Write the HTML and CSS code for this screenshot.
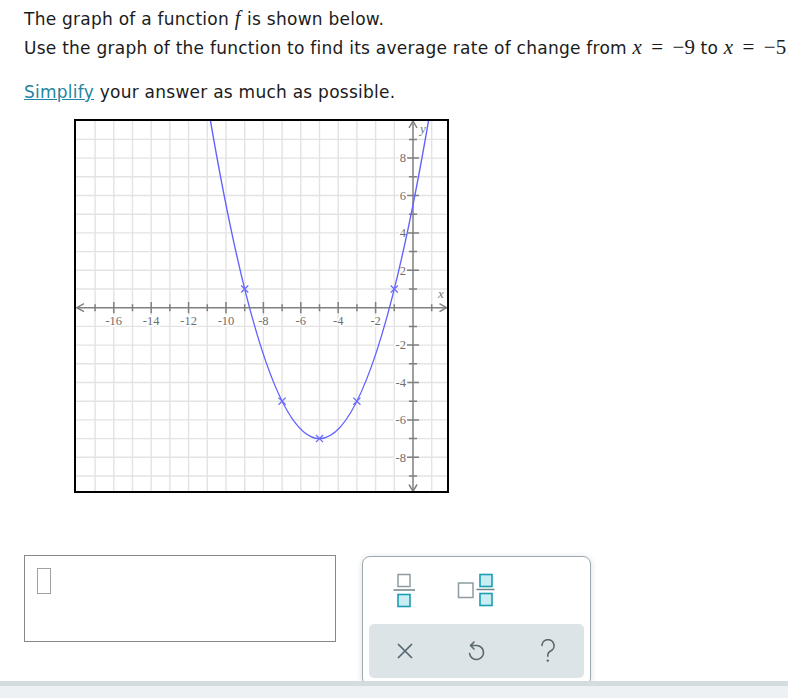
FILE: index.html
```html
<!DOCTYPE html>
<html lang="en">
<head>
    <meta charset="UTF-8">
    <meta name="viewport" content="width=device-width, initial-scale=1.0">
    <title>Average rate of change</title>
    <link rel="stylesheet" href="styles.css">
</head>
<body>
    <div class="question">
        <p class="line">The graph of a function <i class="mvar">f</i> is shown below.</p>
        <p class="line">Use the graph of the function to find its average rate of change from <span class="math"><i>x</i><span class="rel">=</span>−9</span> to <span class="math"><i>x</i><span class="rel">=</span>−5</span>.</p>
        <p class="line hint"><a href="#" class="link">Simplify</a> your answer as much as possible.</p>

        <div class="graph">
            <svg width="375" height="374" viewBox="0 0 375 374">
                <defs>
                    <clipPath id="plot">
                        <rect x="2" y="2" width="371" height="370"/>
                    </clipPath>
                </defs>
                <rect x="0" y="0" width="375" height="374" fill="#fff"/>

                <!-- grid, axes and curve in graph units -->
                <g transform="matrix(18.7 0 0 -18.7 339 188.7)">
                    <path class="grid" vector-effect="non-scaling-stroke"
                          d="M-17 -10V10M-16 -10V10M-15 -10V10M-14 -10V10M-13 -10V10M-12 -10V10M-11 -10V10M-10 -10V10M-9 -10V10M-8 -10V10M-7 -10V10M-6 -10V10M-5 -10V10M-4 -10V10M-3 -10V10M-2 -10V10M-1 -10V10M1 -10V10
                             M-19 9H3M-19 8H3M-19 7H3M-19 6H3M-19 5H3M-19 4H3M-19 3H3M-19 2H3M-19 1H3M-19 -1H3M-19 -2H3M-19 -3H3M-19 -4H3M-19 -5H3M-19 -6H3M-19 -7H3M-19 -8H3M-19 -9H3"/>
                    <path class="axis" vector-effect="non-scaling-stroke"
                          d="M-17.95 0H1.95M0 -9.95V9.95"/>
                    <!-- ticks: even long, odd short -->
                    <path class="axis" vector-effect="non-scaling-stroke"
                          d="M-16 -0.3V0.3M-14 -0.3V0.3M-12 -0.3V0.3M-10 -0.3V0.3M-8 -0.3V0.3M-6 -0.3V0.3M-4 -0.3V0.3M-2 -0.3V0.3
                             M-17 -0.19V0.19M-15 -0.19V0.19M-13 -0.19V0.19M-11 -0.19V0.19M-9 -0.19V0.19M-7 -0.19V0.19M-5 -0.19V0.19M-3 -0.19V0.19M-1 -0.19V0.19M1 -0.19V0.19
                             M-0.32 8H0.32M-0.32 6H0.32M-0.32 4H0.32M-0.32 2H0.32M-0.32 -2H0.32M-0.32 -4H0.32M-0.32 -6H0.32M-0.32 -8H0.32
                             M-0.22 9H0.22M-0.22 7H0.22M-0.22 5H0.22M-0.22 3H0.22M-0.22 1H0.22M-0.22 -1H0.22M-0.22 -3H0.22M-0.22 -5H0.22M-0.22 -7H0.22M-0.22 -9H0.22"/>
                </g>

                <!-- arrow heads -->
                <path class="axis" d="M10 184.7L2.8 188.7L10 192.7M365.5 184.7L372.5 188.7L365.5 192.7M335 9L339 2L343 9M335 365.5L339 372.3L343 365.5"/>

                <g class="xlabels">
                    <text x="39.8" y="206">-16</text>
                    <text x="77.2" y="206">-14</text>
                    <text x="114.6" y="206">-12</text>
                    <text x="152" y="206">-10</text>
                    <text x="189.4" y="206">-8</text>
                    <text x="226.8" y="206">-6</text>
                    <text x="264.2" y="206">-4</text>
                    <text x="301.6" y="206">-2</text>
                </g>
                <g class="ylabels">
                    <text x="332" y="43.4">8</text>
                    <text x="332" y="80.8">6</text>
                    <text x="332" y="118.2">4</text>
                    <text x="332" y="155.6">2</text>
                    <text x="332" y="230.4">-2</text>
                    <text x="332" y="267.8">-4</text>
                    <text x="332" y="305.2">-6</text>
                    <text x="332" y="342.6">-8</text>
                </g>
                <text class="axis-name" x="367" y="179">x</text>
                <text class="axis-name" x="349" y="14">y</text>

                <g clip-path="url(#plot)">
                    <g transform="matrix(18.7 0 0 -18.7 339 188.7)">
                        <path class="curve" vector-effect="non-scaling-stroke" d="M-11 11Q-5 -25 1 11"/>
                        <path class="point" vector-effect="non-scaling-stroke"
                              d="M-9.19 0.81L-8.81 1.19M-9.19 1.19L-8.81 0.81
                                 M-7.19 -5.19L-6.81 -4.81M-7.19 -4.81L-6.81 -5.19
                                 M-5.19 -7.19L-4.81 -6.81M-5.19 -6.81L-4.81 -7.19
                                 M-3.19 -5.19L-2.81 -4.81M-3.19 -4.81L-2.81 -5.19
                                 M-1.19 0.81L-0.81 1.19M-1.19 1.19L-0.81 0.81"/>
                    </g>
                </g>

                <rect x="1" y="1" width="373" height="372" fill="none" stroke="#000" stroke-width="2"/>
            </svg>
        </div>

        <div class="answer-row">
            <div class="answer-box">
                <div class="slot"></div>
            </div>

            <div class="palette">
                <div class="palette-top">
                    <button class="key" title="Fraction">
                        <svg width="23" height="35" viewBox="0 0 23 35">
                            <rect x="5" y="1.5" width="12" height="12" fill="#fff" stroke="#8d9ca3" stroke-width="1.5"/>
                            <path d="M0.5 17H22" stroke="#6f8189" stroke-width="1.5"/>
                            <rect x="5" y="21.5" width="12" height="12" fill="#c8eef4" stroke="#1b9db2" stroke-width="1.6"/>
                        </svg>
                    </button>
                    <button class="key" title="Mixed number">
                        <svg width="38" height="35" viewBox="0 0 38 35">
                            <rect x="1.5" y="10" width="14.5" height="14.5" fill="#fff" stroke="#8d9ca3" stroke-width="1.5"/>
                            <rect x="23" y="1.5" width="12" height="12" fill="#c8eef4" stroke="#1b9db2" stroke-width="1.6"/>
                            <path d="M19.5 16.5H37.5" stroke="#6f8189" stroke-width="1.5"/>
                            <rect x="23" y="20.5" width="12" height="12" fill="#c8eef4" stroke="#1b9db2" stroke-width="1.6"/>
                        </svg>
                    </button>
                    <span></span>
                </div>
                <div class="palette-actions">
                    <button class="key" title="Clear">
                        <svg width="16" height="16" viewBox="0 0 16 16">
                            <path d="M1 1L15 15M15 1L1 15" stroke="#56676f" stroke-width="1.7" fill="none"/>
                        </svg>
                    </button>
                    <button class="key" title="Undo">
                        <svg width="17" height="22" viewBox="0 0 17 22">
                            <path d="M6 2L2.5 5.5L6 9M2.5 5.5H8.5A7 7 0 1 1 1.6 13.6" stroke="#56676f" stroke-width="1.6" fill="none" stroke-linecap="round" stroke-linejoin="round"/>
                        </svg>
                    </button>
                    <button class="key" title="Help">
                        <svg width="16" height="24" viewBox="0 0 16 24">
                            <path d="M2 6.5A6 6 0 1 1 10.2 12.2Q7.8 13.4 7.8 16V17.2" stroke="#56676f" stroke-width="1.6" fill="none" stroke-linecap="round"/>
                            <circle cx="7.8" cy="21.6" r="1.2" fill="#56676f"/>
                        </svg>
                    </button>
                </div>
            </div>
        </div>
    </div>

    <div class="footer"></div>
</body>
</html>
```

FILE: styles.css
```css
html, body {
    overflow: hidden;
}
body {
    margin: 0;
    font-family: "DejaVu Sans", Verdana, sans-serif;
    font-size: 17px;
    letter-spacing: 0.25px;
    color: #1b1b1b;
    background: #fff;
}
.question {
    padding: 5px 0 0 24px;
}
.line {
    margin: 0;
    line-height: 29px;
    height: 29px;
    white-space: nowrap;
}
.hint {
    margin-top: 15px;
}
.mvar {
    font-family: "Liberation Serif", "Times New Roman", serif;
    font-size: 20px;
    line-height: 1;
    margin-right: 1px;
}
.math {
    font-family: "Liberation Serif", "Times New Roman", serif;
    font-size: 21px;
    line-height: 1;
    letter-spacing: 0;
}
.rel {
    margin: 0 0.45em;
}
.link {
    color: #1f84a0;
    text-decoration: underline;
}

.graph {
    margin: 12px 0 0 50px;
    height: 374px;
}
.graph svg {
    display: block;
}
.grid {
    fill: none;
    stroke: #e3e3e3;
    stroke-width: 1.4;
}
.axis {
    fill: none;
    stroke: #808080;
    stroke-width: 1.5;
}
.curve {
    fill: none;
    stroke: #6161ff;
    stroke-width: 1.4;
}
.point {
    fill: none;
    stroke: #6a6aff;
    stroke-width: 1.3;
}
.xlabels text, .ylabels text {
    font-family: "Liberation Serif", "Times New Roman", serif;
    font-size: 12.5px;
    letter-spacing: 0;
    fill: #6e6e6e;
    stroke: #fff;
    stroke-width: 3px;
    paint-order: stroke;
}
.xlabels text {
    text-anchor: middle;
}
.ylabels text {
    text-anchor: end;
}
.axis-name {
    font-family: "Liberation Serif", "Times New Roman", serif;
    font-style: italic;
    font-size: 13px;
    fill: #777;
    text-anchor: middle;
}

.answer-row {
    display: flex;
    align-items: flex-start;
    gap: 26px;
    margin-top: 62px;
}
.answer-box {
    box-sizing: border-box;
    width: 312px;
    height: 87px;
    border: 1px solid #888;
    padding: 12px;
}
.slot {
    box-sizing: border-box;
    width: 14px;
    height: 26px;
    border: 1.5px solid #a2a2a2;
}
.palette {
    box-sizing: border-box;
    width: 229px;
    margin-top: 1px;
    padding: 0 6px 7px;
    border: 1px solid #9caab0;
    border-radius: 8px;
    box-shadow: 0 1px 6px rgba(0, 0, 0, 0.14);
    background: #fff;
}
.palette-top, .palette-actions {
    display: grid;
    grid-template-columns: repeat(3, 1fr);
    justify-items: center;
}
.palette-top {
    padding: 16px 0;
    align-items: start;
}
.palette-actions {
    height: 54px;
    align-items: center;
    background: #dde4e7;
    border-radius: 5px;
}
.key {
    background: none;
    border: none;
    padding: 0;
    cursor: pointer;
}
.key svg {
    display: block;
}

.footer {
    position: fixed;
    left: 0;
    right: 0;
    bottom: 0;
    height: 12px;
    border-top: 5px solid #d3dcdf;
    background: #edf1f3;
}
```
